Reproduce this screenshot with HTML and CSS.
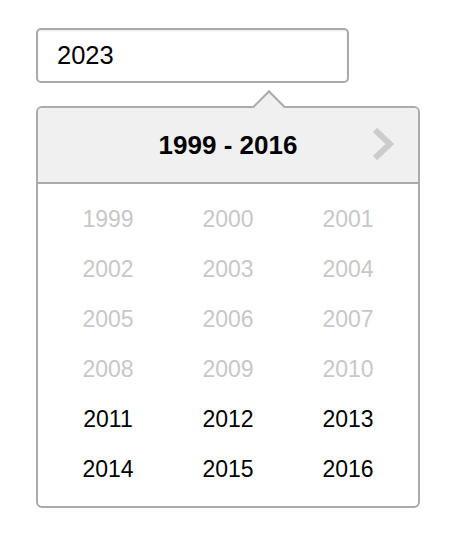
FILE: index.html
```html
<!DOCTYPE html>
<html>
<head>
<meta charset="utf-8">
<link rel="stylesheet" href="styles.css">
</head>
<body>
<div class="picker">
  <div class="field">2023</div>
  <div class="popup">
    <div class="header">
      <span class="title">1999 - 2016</span>
      <span class="next">
        <svg width="22" height="32" viewBox="0 0 22 32"><path d="M3 2 L18 16 L3 30" fill="none" stroke="#cccccc" stroke-width="6"/></svg>
      </span>
    </div>
    <div class="grid">
      <span class="year muted">1999</span>
      <span class="year muted">2000</span>
      <span class="year muted">2001</span>
      <span class="year muted">2002</span>
      <span class="year muted">2003</span>
      <span class="year muted">2004</span>
      <span class="year muted">2005</span>
      <span class="year muted">2006</span>
      <span class="year muted">2007</span>
      <span class="year muted">2008</span>
      <span class="year muted">2009</span>
      <span class="year muted">2010</span>
      <span class="year">2011</span>
      <span class="year">2012</span>
      <span class="year">2013</span>
      <span class="year">2014</span>
      <span class="year">2015</span>
      <span class="year">2016</span>
    </div>
  </div>
</div>
</body>
</html>
```
FILE: styles.css
```css
html, body {
  margin: 0;
  background: #ffffff;
}
body {
  padding: 28px 36px;
  font-family: "Liberation Sans", Arial, Helvetica, sans-serif;
  color: #000;
}
.picker {
  width: 384px;
}
.field {
  box-sizing: border-box;
  width: 313px;
  height: 55px;
  border: 2px solid #aaaaaa;
  border-radius: 5px;
  box-shadow: inset 0 1px 2px rgba(0,0,0,0.08);
  padding: 0 19px;
  font-size: 25.5px;
  line-height: 51px;
}
.popup {
  position: relative;
  margin-top: 23px;
  box-sizing: border-box;
  width: 384px;
  border: 2px solid #aaaaaa;
  border-radius: 6px;
}
.popup::before {
  content: "";
  position: absolute;
  left: 219px;
  top: -13px;
  width: 22px;
  height: 22px;
  background: #f0f0f0;
  border-left: 2px solid #aaaaaa;
  border-top: 2px solid #aaaaaa;
  transform: rotate(45deg);
}
.header {
  position: relative;
  display: flex;
  align-items: center;
  justify-content: center;
  height: 74px;
  background: #f0f0f0;
  border-bottom: 2px solid #aaaaaa;
  border-radius: 4px 4px 0 0;
}
.title {
  position: relative;
  font-weight: bold;
  font-size: 26px;
}
.next {
  position: absolute;
  right: 24px;
  top: 20px;
  display: flex;
}
.grid {
  display: grid;
  grid-template-columns: repeat(3, 120px);
  grid-auto-rows: 50px;
  padding: 10px 10px 12px;
}
.year {
  display: flex;
  align-items: center;
  justify-content: center;
  font-size: 23px;
}
.muted {
  color: #c8c8c8;
}
```
